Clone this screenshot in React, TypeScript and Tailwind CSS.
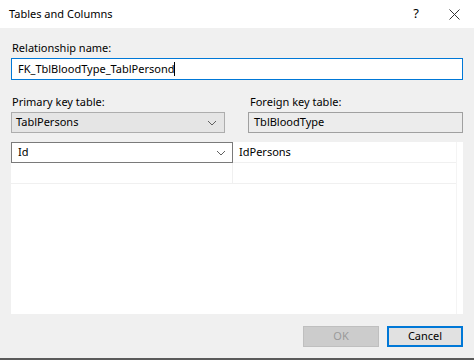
import React from 'react';

const font = { fontFamily: '"Noto Sans", "Open Sans", sans-serif' };

function Chevron() {
  return (
    <svg width="10" height="6" viewBox="0 0 10 6" className="text-[#606060]">
      <path d="M1 1l4 4 4-4" fill="none" stroke="currentColor" strokeWidth="1" />
    </svg>
  );
}

export default function App() {
  return (
    <div className="w-[474px] h-[360px] bg-[#f0f0f0] flex flex-col text-[11px] text-black overflow-hidden" style={font}>
      {/* Title bar */}
      <div className="h-[28px] bg-white flex items-center pl-[9px] pr-[14px] shrink-0">
        <span className="flex-1 text-[11px]">Tables and Columns</span>
        <span className="w-[10px] mr-[28px] text-[13px] text-center">?</span>
        <svg width="11" height="11" viewBox="0 0 11 11">
          <path d="M0.5 0.5l10 10M10.5 0.5l-10 10" stroke="#333" strokeWidth="1" />
        </svg>
      </div>

      <div className="flex-1 flex flex-col px-[11px] pt-[10px]">
        <div className="h-[20px] leading-[20px] pl-[1px]">Relationship name:</div>
        <div className="h-[22px] border border-[#0078d7] bg-white flex items-center px-[6px]">
          <span>FK_TblBloodType_TablPersond</span>
          <span className="w-px h-[14px] bg-black" />
        </div>

        <div className="flex mt-[11px]">
          <div className="w-[214px] flex flex-col">
            <div className="h-[21px] leading-[21px] pl-[1px]">Primary key table:</div>
            <div className="h-[21px] border border-[#adadad] bg-[#e5e5e5] flex items-center pl-[4px] pr-[7px]">
              <span className="flex-1">TablPersons</span>
              <Chevron />
            </div>
          </div>
          <div className="flex-1 flex flex-col ml-[23px]">
            <div className="h-[21px] leading-[21px] pl-[2px]">Foreign key table:</div>
            <div className="h-[21px] border border-[#a0a0a0] bg-[#ececec] flex items-center px-[5px]">
              TblBloodType
            </div>
          </div>
        </div>

        {/* Column grid */}
        <div className="mt-[9px] h-[172px] bg-white flex">
          <div className="flex-1 flex flex-col">
            <div className="flex h-[21px]">
              <div className="w-[222px] border border-[#7a7a7a] flex items-center pl-[6px] pr-[6px]">
                <span className="flex-1">Id</span>
                <Chevron />
              </div>
              <div className="flex-1 flex items-center pl-[6px] border-b border-[#f0f0f0]">IdPersons</div>
            </div>
            <div className="flex h-[21px] border-b border-[#f0f0f0]">
              <div className="w-[222px] border-r border-[#f0f0f0]" />
              <div className="flex-1" />
            </div>
            <div className="flex-1" />
          </div>
          <div className="w-[7px] border-l border-[#f4f4f4]" />
        </div>

        <div className="flex justify-end gap-[8px] mt-[12px]">
          <div className="w-[76px] h-[21px] bg-[#cccccc] border border-[#bfbfbf] text-[#9a9a9a] flex items-center justify-center">OK</div>
          <div className="w-[76px] h-[21px] bg-[#e1e1e1] border-2 border-[#0078d7] flex items-center justify-center">Cancel</div>
        </div>
      </div>
      <div className="h-[2px] bg-[#5a5a5a] shrink-0" />
    </div>
  );
}
